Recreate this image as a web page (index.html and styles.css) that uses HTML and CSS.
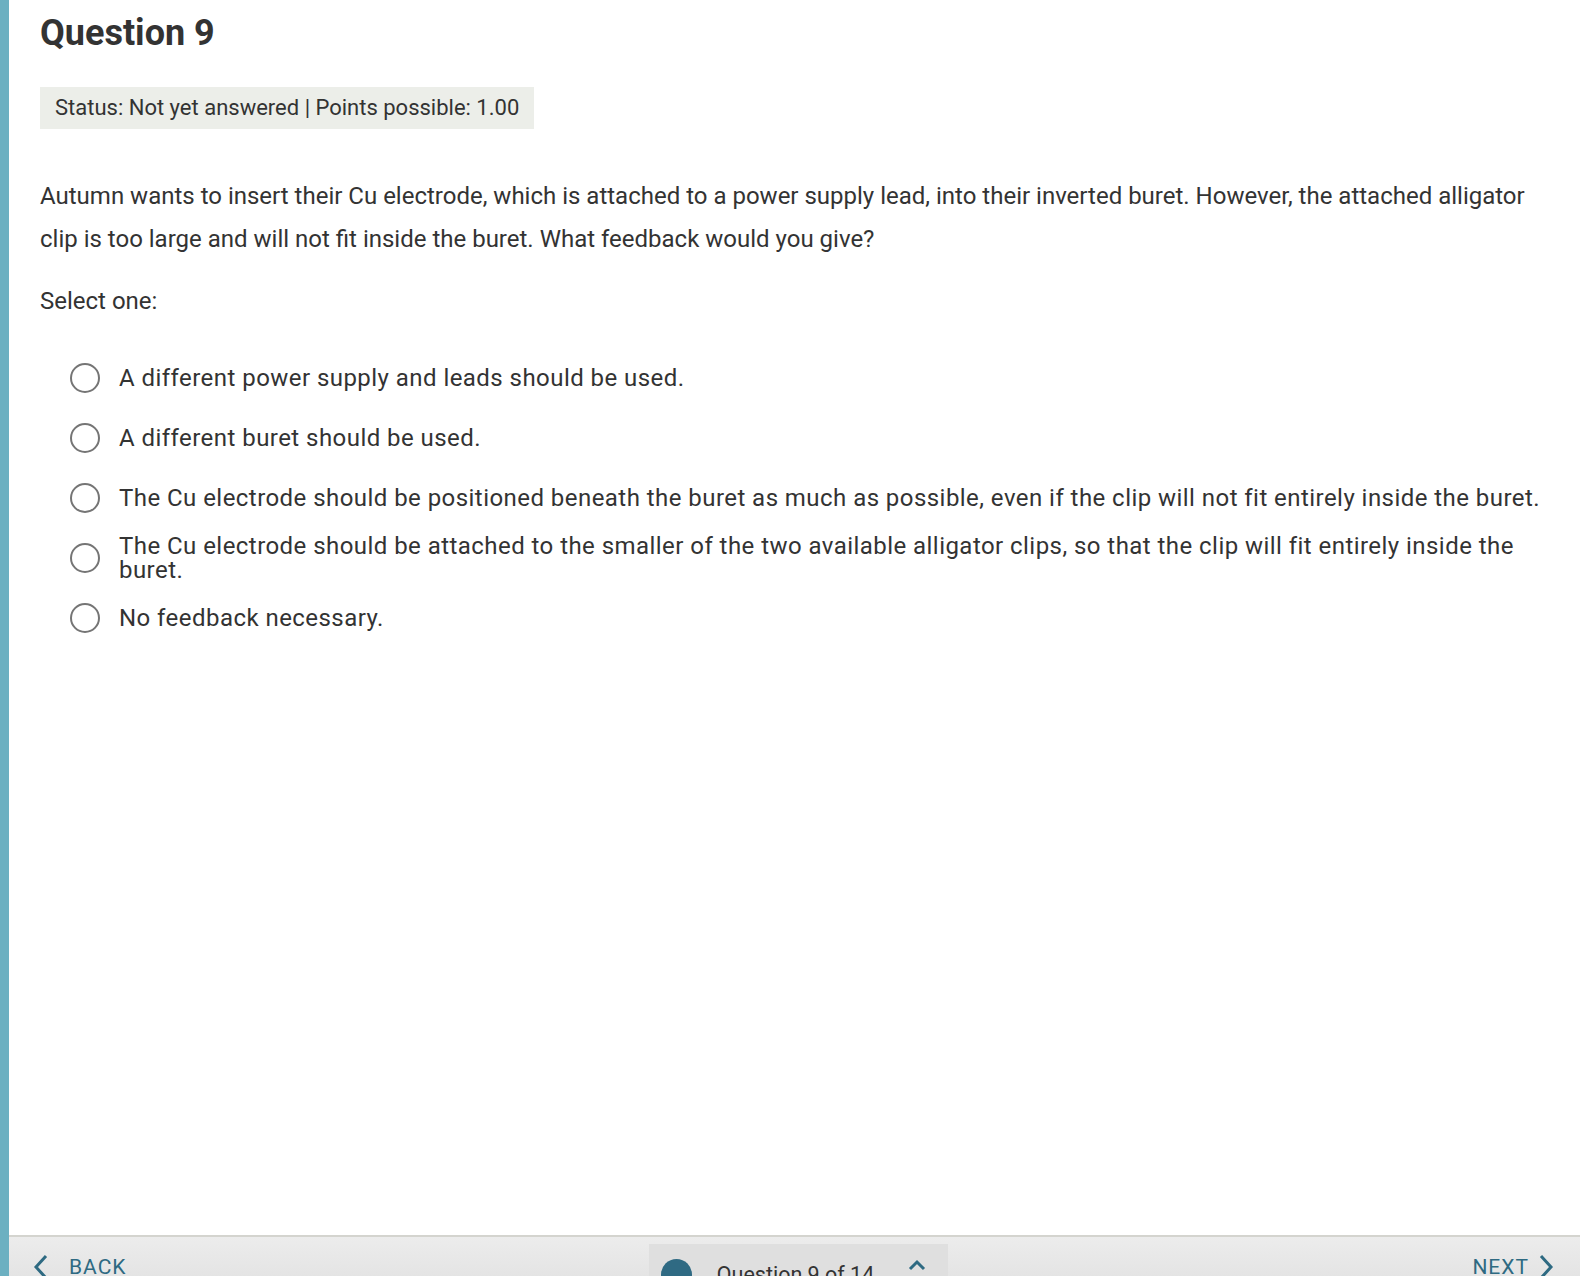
FILE: index.html
```html
<!DOCTYPE html>
<html lang="en">

<head>
  <meta charset="UTF-8">
  <meta name="viewport" content="width=device-width, initial-scale=1.0">
  <title>Question 9</title>
  <link rel="stylesheet" href="styles.css">
</head>

<body>

  <div class="quiz-layout">
    <main class="quiz-main">
      <h1 class="q-title">Question 9</h1>

      <div class="q-status">Status: Not yet answered | Points possible: 1.00</div>

      <p class="q-text">Autumn wants to insert their Cu electrode, which is attached to a power supply lead, into their inverted buret. However, the attached alligator clip is too large and will not fit inside the buret. What feedback would you give?</p>

      <p class="q-prompt">Select one:</p>

      <!-- 選択肢 -->
      <ul class="answer-list">
        <li class="answer">
          <span class="radio"></span>
          <span class="answer-label">A different power supply and leads should be used.</span>
        </li>
        <li class="answer">
          <span class="radio"></span>
          <span class="answer-label">A different buret should be used.</span>
        </li>
        <li class="answer">
          <span class="radio"></span>
          <span class="answer-label">The Cu electrode should be positioned beneath the buret as much as possible, even if the clip will not fit entirely inside the buret.</span>
        </li>
        <li class="answer">
          <span class="radio"></span>
          <span class="answer-label">The Cu electrode should be attached to the smaller of the two available alligator clips, so that the clip will fit entirely inside the buret.</span>
        </li>
        <li class="answer">
          <span class="radio"></span>
          <span class="answer-label">No feedback necessary.</span>
        </li>
      </ul>
    </main>

    <!-- 下部ナビゲーション -->
    <footer class="quiz-nav">
      <button class="nav-btn back">
        <svg class="chev" width="16" height="26" viewBox="0 0 16 26"><path d="M13 2 L3 13 L13 24" fill="none" stroke="currentColor" stroke-width="3"/></svg>
        BACK
      </button>

      <div class="nav-progress">
        <span class="progress-dot"></span>
        <span class="progress-text">Question 9 of 14</span>
        <svg class="caret" width="18" height="12" viewBox="0 0 18 12"><path d="M2 10 L9 3 L16 10" fill="none" stroke="currentColor" stroke-width="3"/></svg>
      </div>

      <button class="nav-btn next">
        NEXT
        <svg class="chev" width="16" height="26" viewBox="0 0 16 26"><path d="M3 2 L13 13 L3 24" fill="none" stroke="currentColor" stroke-width="3"/></svg>
      </button>
    </footer>
  </div>

</body>
</html>
```

FILE: styles.css
```css
html,
body {
  margin: 0;
  height: 100%;
  overflow: hidden;
}

body {
  font-family: Roboto, "Liberation Sans", sans-serif;
  color: #333;
  background: #fff;
}

.quiz-layout {
  display: flex;
  flex-direction: column;
  height: calc(100vh + 31px);
  border-left: 9px solid #6cb0c1;
}

.quiz-main {
  flex: 1;
  padding: 0 30px 0 31px;
}

.q-title {
  margin: 12px 0 0;
  font-size: 36px;
  font-weight: 700;
  line-height: 42px;
  color: #333;
}

.q-status {
  display: inline-block;
  margin-top: 33px;
  padding: 0 15px;
  height: 42px;
  line-height: 42px;
  font-size: 22px;
  background: #eceee9;
}

.q-text {
  margin: 46px 0 0;
  font-size: 24px;
  line-height: 1.8;
}

.q-prompt {
  margin: 25px 0 0;
  font-size: 24px;
  line-height: 30px;
}

.answer-list {
  list-style: none;
  margin: 32px 0 0;
  padding: 0 0 0 30px;
}

.answer {
  display: flex;
  align-items: center;
  gap: 19px;
  height: 60px;
}

.radio {
  flex: 0 0 auto;
  width: 26px;
  height: 26px;
  border: 2.5px solid #757575;
  border-radius: 50%;
}

.answer-label {
  font-size: 24px;
  line-height: 24px;
  letter-spacing: 0.45px;
}

/* 下部ナビゲーション */
.quiz-nav {
  height: 70px;
  display: grid;
  grid-template-columns: 1fr auto 1fr;
  align-items: start;
  border-top: 2px solid #d4d4cf;
  background: linear-gradient(#ececec, #dedede);
}

.nav-btn {
  display: flex;
  align-items: center;
  gap: 20px;
  margin-top: 17px;
  padding: 0 24px;
  border: none;
  background: none;
  color: #2e6a82;
  font-family: Roboto, "Liberation Sans", sans-serif;
  font-size: 21px;
  letter-spacing: 1px;
  cursor: pointer;
}

.back {
  justify-self: start;
}

.next {
  justify-self: end;
  gap: 9px;
  padding-right: 26px;
}

.nav-progress {
  display: flex;
  align-items: center;
  margin: 7px 0 0 8px;
  height: 60px;
  padding: 0 22px 0 12px;
  background: #dfdfdf;
  white-space: nowrap;
}

.progress-dot {
  flex: 0 0 auto;
  width: 31px;
  height: 31px;
  border-radius: 50%;
  background: #2f6a83;
}

.progress-text {
  margin-left: 25px;
  font-size: 21.5px;
  color: #333;
}

.caret {
  flex: 0 0 auto;
  margin: 0 0 18px 34px;
  color: #2e6a82;
}
```
